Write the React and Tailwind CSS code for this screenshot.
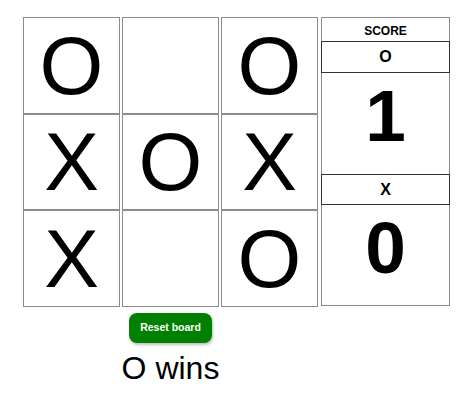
import React, { useState } from "react";

const start = ["O", "", "O", "X", "O", "X", "X", "", "O"];
const rowHeights = ["h-[97px]", "h-[96px]", "h-[97px]"];

function Square({ value }) {
  return (
    <div className="w-[97px] h-full border border-[#8c8c8c] flex items-center justify-center text-[82px] leading-none text-black">
      {value}
    </div>
  );
}

export default function App() {
  const [squares] = useState(start);
  const [score] = useState({ O: 1, X: 0 });

  return (
    <div className="w-[474px] h-[404px] bg-white pl-[23px] pt-[17px] flex gap-[3px] font-['Liberation_Sans',Arial,sans-serif] text-black">
      <div className="flex flex-col items-center">
        <div className="flex flex-col">
          {[0, 1, 2].map((r) => (
            <div key={r} className={`flex gap-[2px] ${rowHeights[r]}`}>
              {[0, 1, 2].map((c) => (
                <Square key={c} value={squares[r * 3 + c]} />
              ))}
            </div>
          ))}
        </div>
        <button className="mt-[6px] w-[83px] h-[30px] rounded-lg bg-[#008000] text-white text-[10.5px] font-bold shadow-[1px_2px_3px_rgba(0,0,0,0.25)]">
          Reset board
        </button>
        <div className="mt-[7px] text-[32px] leading-[37px]">O wins</div>
      </div>

      <div className="w-[129px] flex flex-col">
        <div className="h-[24px] border-x border-t border-[#8c8c8c] flex items-center justify-center text-[12px] font-bold leading-none pt-[2px]">
          SCORE
        </div>
        <div className="h-[32px] border border-[#333] flex items-center justify-center text-[16px] font-bold leading-none">
          O
        </div>
        <div className="h-[101px] border-x border-[#8c8c8c] flex justify-center pt-[6px] text-[73px] font-bold leading-none">
          {score.O}
        </div>
        <div className="h-[31px] border border-[#333] flex items-center justify-center text-[16px] font-bold leading-none">
          X
        </div>
        <div className="h-[101px] border-x border-b border-[#8c8c8c] flex justify-center pt-[6px] text-[73px] font-bold leading-none">
          {score.X}
        </div>
      </div>
    </div>
  );
}
